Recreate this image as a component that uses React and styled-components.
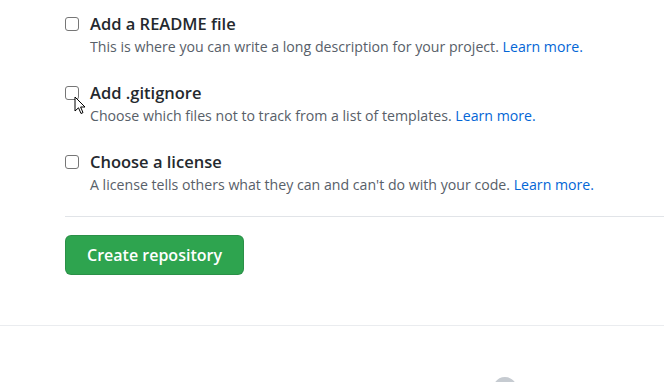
import React from 'react'
import styled, { createGlobalStyle } from 'styled-components'

const GlobalStyle = createGlobalStyle`
    html, body {
        margin: 0;
        padding: 0;
        background: #fff;
        overflow: hidden;
    }
    body {
        font-family: "Open Sans", "Noto Sans", sans-serif;
        color: #24292e;
    }
`

const options = [
    {
        id: 'readme',
        title: 'Add a README file',
        text: 'This is where you can write a long description for your project.',
    },
    {
        id: 'gitignore',
        title: 'Add .gitignore',
        text: 'Choose which files not to track from a list of templates.',
    },
    {
        id: 'license',
        title: 'Choose a license',
        text: "A license tells others what they can and can't do with your code.",
    },
]

const Cursor = () => (
    <CursorIcon width="13" height="20" viewBox="0 0 13 20">
        <path d="M1 1 L1 15 L4.5 11.8 L7 17.5 L9 16.6 L6.6 11 L11 11 Z"
              fill="#fff" stroke="#000" strokeWidth="1" strokeLinejoin="round"/>
    </CursorIcon>
)

const GithubMark = () => (
    <svg width="24" height="24" viewBox="0 0 16 16" fill="#c6cbd1">
        <path d="M8 0C3.58 0 0 3.58 0 8c0 3.54 2.29 6.53 5.47 7.59.4.07.55-.17.55-.38 0-.19-.01-.82-.01-1.49-2.01.37-2.53-.49-2.69-.94-.09-.23-.48-.94-.82-1.13-.28-.15-.68-.52-.01-.53.63-.01 1.08.58 1.23.82.72 1.21 1.87.87 2.33.66.07-.52.28-.87.51-1.07-1.78-.2-3.64-.89-3.64-3.95 0-.87.31-1.59.82-2.15-.08-.2-.36-1.02.08-2.12 0 0 .67-.21 2.2.82.64-.18 1.32-.27 2-.27.68 0 1.36.09 2 .27 1.53-1.04 2.2-.82 2.2-.82.44 1.1.16 1.92.08 2.12.51.56.82 1.27.82 2.15 0 3.07-1.87 3.75-3.65 3.95.29.25.54.73.54 1.48 0 1.07-.01 1.93-.01 2.2 0 .21.15.46.55.38A8.013 8.013 0 0016 8c0-4.42-3.58-8-8-8z"/>
    </svg>
)

const App = () => {
    return (
        <Page>
            <GlobalStyle/>
            <Form>
                {options.map(opt => (
                    <Option key={opt.id}>
                        <BoxWrap>
                            <Checkbox type="checkbox" id={opt.id}/>
                            {opt.id === 'gitignore' && <Cursor/>}
                        </BoxWrap>
                        <OptionBody>
                            <OptionTitle htmlFor={opt.id}>{opt.title}</OptionTitle>
                            <OptionNote>
                                {opt.text} <Link href="#">Learn more.</Link>
                            </OptionNote>
                        </OptionBody>
                    </Option>
                ))}
                <Divider/>
                <CreateButton type="button">Create repository</CreateButton>
            </Form>
            <Footer>
                <GithubMark/>
            </Footer>
        </Page>
    )
}

export default App

const Page = styled.div`
    width: 664px;
    height: 382px;
    overflow: hidden;
`

const Form = styled.div`
    padding: 13px 0 0 65px;
`

const Option = styled.div`
    display: flex;
    align-items: flex-start;
    margin-bottom: 24px;
`

const BoxWrap = styled.div`
    position: relative;
    width: 14px;
    margin-right: 11px;
    padding-top: 4px;
`

const Checkbox = styled.input`
    width: 14px;
    height: 14px;
    margin: 0;
    display: block;
    appearance: none;
    border: 1px solid #767676;
    border-radius: 3px;
    background: #fff;
`

const CursorIcon = styled.svg`
    position: absolute;
    left: 9px;
    top: 14px;
`

const OptionBody = styled.div`
    display: flex;
    flex-direction: column;
`

const OptionTitle = styled.label`
    font-size: 16.5px;
    font-weight: 600;
    line-height: 22px;
    color: #24292e;
`

const OptionNote = styled.p`
    margin: 1px 0 0;
    font-size: 14.15px;
    line-height: 22px;
    color: #586069;
`

const Link = styled.a`
    color: #0366d6;
    text-decoration: none;
`

const Divider = styled.div`
    height: 1px;
    background: #e1e4e8;
    margin: -4px 0 18px;
`

const CreateButton = styled.button`
    width: 179px;
    height: 40px;
    border: 1px solid rgba(27, 31, 35, 0.15);
    border-radius: 6px;
    background: #2ea44f;
    color: #fff;
    font-family: "Open Sans", "Noto Sans", sans-serif;
    font-size: 16px;
    font-weight: 600;
    padding: 0;
`

const Footer = styled.div`
    margin-top: 50px;
    border-top: 1px solid #eaecef;
    display: flex;
    justify-content: center;
    padding: 51px 0 0 346px;
    box-sizing: border-box;
    width: 664px;
`
